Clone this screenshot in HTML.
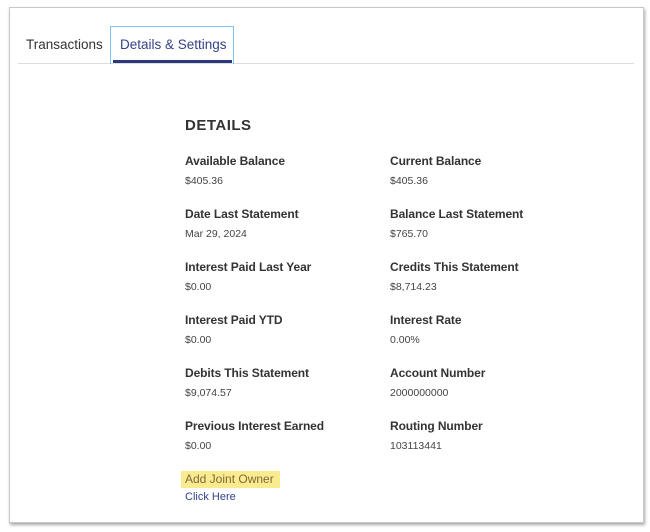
<!DOCTYPE html>
<html><head><style>
body{margin:0;width:650px;height:532px;background:#fff;font-family:"Liberation Sans",sans-serif;position:relative;overflow:hidden}
.card{position:absolute;left:9px;top:7px;width:633px;height:514px;border:1px solid #c8c8c8;box-shadow:1px 2px 3px rgba(0,0,0,.35);background:#fff}
.a{position:absolute;white-space:nowrap}
.l{font-size:12px;color:#333;font-weight:bold;letter-spacing:-.1px}
.v{font-size:10.5px;color:#444}
</style></head><body>
<div class="card"></div>
<div class="a" style="left:18px;top:63px;width:616px;height:1px;background:#ddd"></div>
<div class="a" style="left:110px;top:26px;width:122px;height:37px;border:1px solid #7cc4f0;border-bottom:none"></div>
<div class="a" style="left:113px;top:60px;width:119px;height:3px;background:#2a3a7a"></div>
<div class="a" style="left:26px;top:37px;font-size:13.5px;color:#333">Transactions</div>
<div class="a" style="left:120px;top:37px;font-size:13.5px;color:#34428a">Details &amp; Settings</div>
<div class="a" style="left:185px;top:117px;font-size:15px;color:#333;font-weight:bold;letter-spacing:.5px">DETAILS</div>
<div class="a l" style="left:185px;top:154px">Available Balance</div><div class="a v" style="left:185px;top:175px">$405.36</div>
<div class="a l" style="left:390px;top:154px">Current Balance</div><div class="a v" style="left:390px;top:175px">$405.36</div>
<div class="a l" style="left:185px;top:207px">Date Last Statement</div><div class="a v" style="left:185px;top:228px">Mar 29, 2024</div>
<div class="a l" style="left:390px;top:207px">Balance Last Statement</div><div class="a v" style="left:390px;top:228px">$765.70</div>
<div class="a l" style="left:185px;top:260px">Interest Paid Last Year</div><div class="a v" style="left:185px;top:281px">$0.00</div>
<div class="a l" style="left:390px;top:260px">Credits This Statement</div><div class="a v" style="left:390px;top:281px">$8,714.23</div>
<div class="a l" style="left:185px;top:313px">Interest Paid YTD</div><div class="a v" style="left:185px;top:334px">$0.00</div>
<div class="a l" style="left:390px;top:313px">Interest Rate</div><div class="a v" style="left:390px;top:334px">0.00%</div>
<div class="a l" style="left:185px;top:366px">Debits This Statement</div><div class="a v" style="left:185px;top:387px">$9,074.57</div>
<div class="a l" style="left:390px;top:366px">Account Number</div><div class="a v" style="left:390px;top:387px">2000000000</div>
<div class="a l" style="left:185px;top:419px">Previous Interest Earned</div><div class="a v" style="left:185px;top:440px">$0.00</div>
<div class="a l" style="left:390px;top:419px">Routing Number</div><div class="a v" style="left:390px;top:440px">103113441</div>
<div class="a" style="left:181px;top:471px;width:99px;height:17px;background:#fbeb8f"></div>
<div class="a" style="left:185px;top:472px;font-size:12px;color:#7a6a3a">Add Joint Owner</div>
<div class="a" style="left:185px;top:491px;font-size:11px;color:#34428a">Click Here</div>
</body></html>
